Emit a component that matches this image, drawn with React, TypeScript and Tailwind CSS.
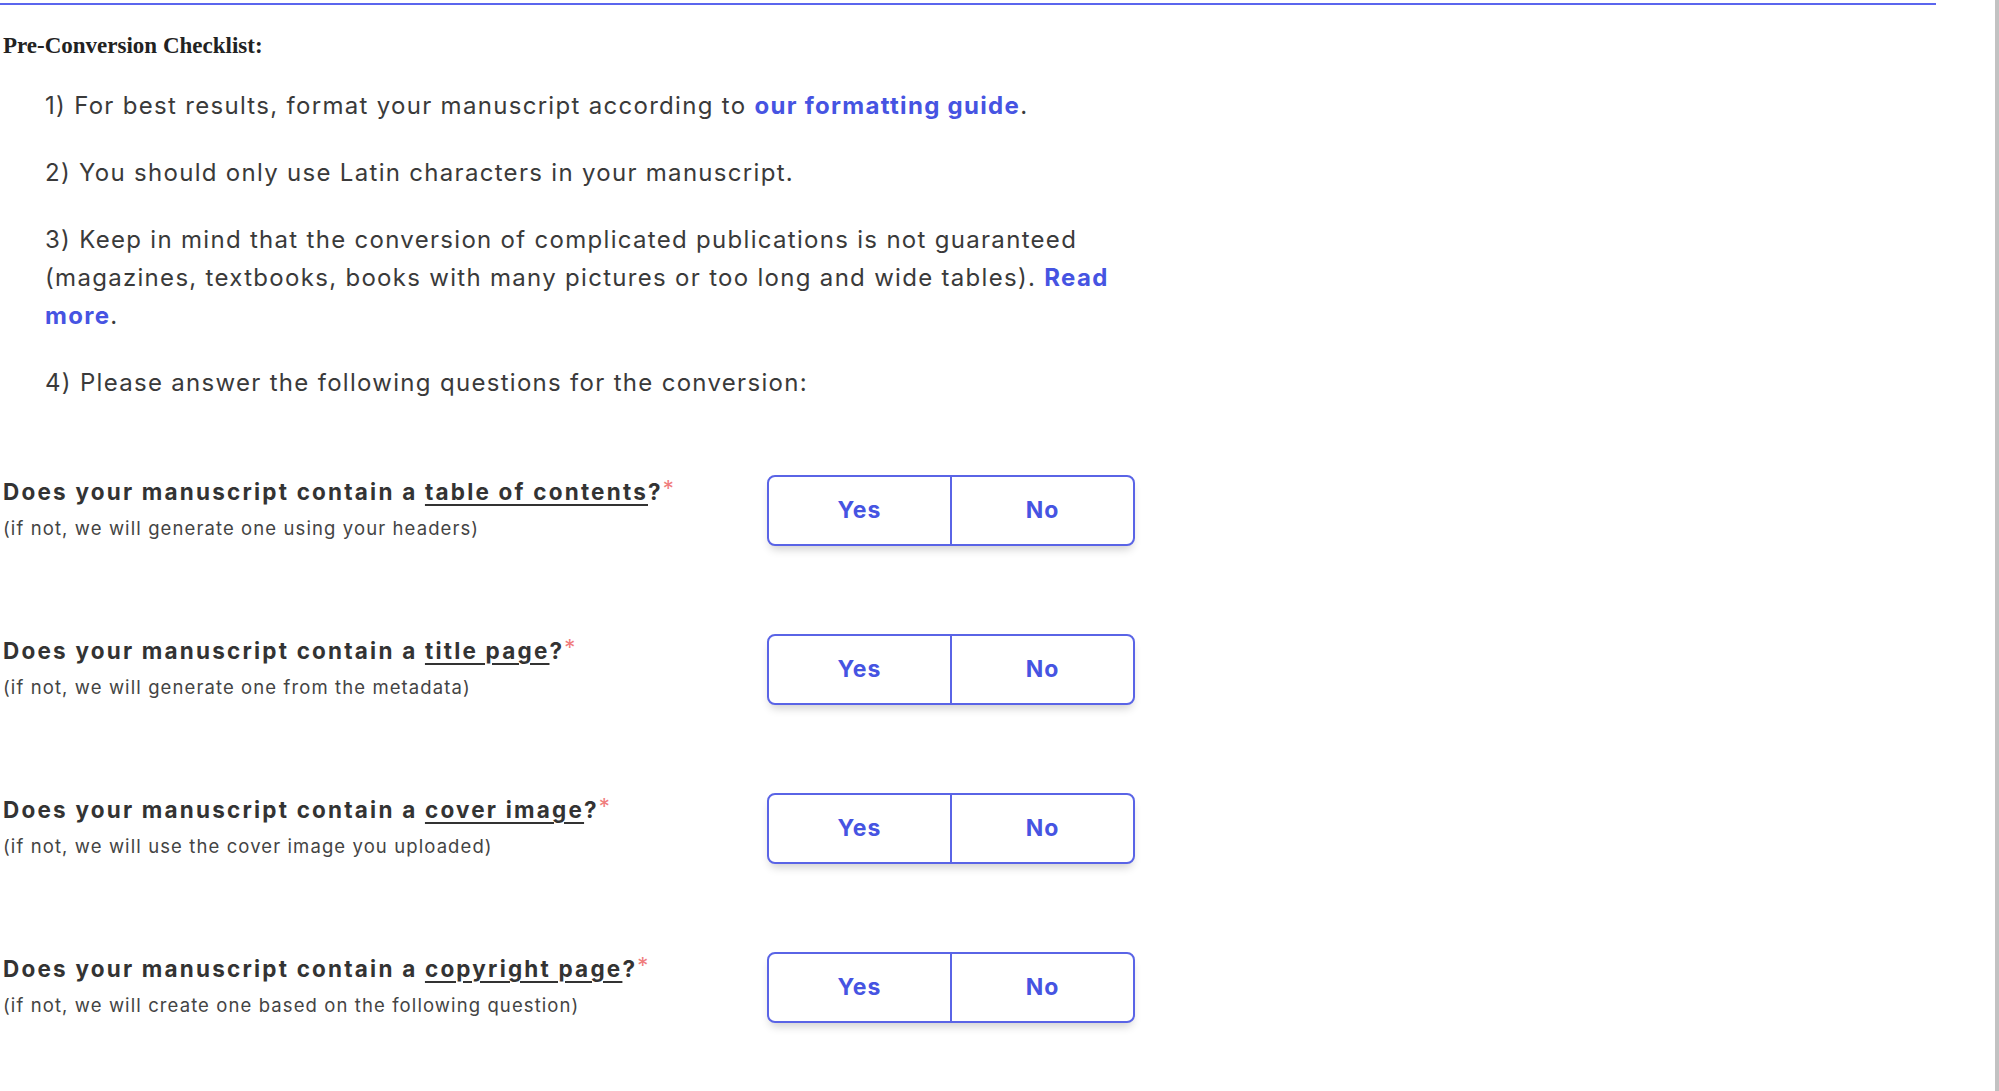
import React from 'react'

// ============================================
// Data
// ============================================

const questions = [
  {
    before: 'Does your manuscript contain a ',
    term: 'table of contents',
    hint: '(if not, we will generate one using your headers)',
  },
  {
    before: 'Does your manuscript contain a ',
    term: 'title page',
    hint: '(if not, we will generate one from the metadata)',
  },
  {
    before: 'Does your manuscript contain a ',
    term: 'cover image',
    hint: '(if not, we will use the cover image you uploaded)',
  },
  {
    before: 'Does your manuscript contain a ',
    term: 'copyright page',
    hint: '(if not, we will create one based on the following question)',
  },
]

// ============================================
// Yes / No toggle
// ============================================

function YesNo() {
  return (
    <div className="flex h-[71px] w-[368px] shrink-0 overflow-hidden rounded-[8px] border-2 border-[#5a64e6] bg-white shadow-[0_6px_10px_-3px_rgba(0,0,0,0.2)]">
      <button className="flex-1 border-r-2 border-[#5a64e6] text-[23px] font-bold tracking-[1px] text-[#4654e2]">
        Yes
      </button>
      <button className="flex-1 text-[23px] font-bold tracking-[1px] text-[#4654e2]">No</button>
    </div>
  )
}

// ============================================
// Question row
// ============================================

function QuestionRow({ before, term, hint }: { before: string; term: string; hint: string }) {
  return (
    <div className="flex items-start">
      <div className="w-[764px] pt-[3px]">
        <p className="text-[22.5px] font-bold leading-[28px] tracking-[2.2px] text-[#333]">
          {before}
          <span className="underline decoration-[1.5px] underline-offset-[4px]">{term}</span>?
          <span className="relative -top-[4px] text-[22px] font-normal text-[#f07c7c]">*</span>
        </p>
        <p className="mt-[10px] text-[18.5px] leading-[24px] tracking-[1.1px] text-[#444]">{hint}</p>
      </div>
      <YesNo />
    </div>
  )
}

// ============================================
// Page
// ============================================

export default function App() {
  return (
    <div
      className="flex min-h-screen bg-white"
      style={{ fontFamily: 'Inter, "Open Sans", sans-serif' }}
    >
      <div className="flex-1">
        <div className="mt-[3px] h-[2px] w-[1936px] bg-[#5b66ee]" />

        <div className="w-[1140px] pl-[3px]">
          <h2 className="mt-[27px] font-['Liberation_Serif',serif] text-[23px] font-bold leading-[28px] text-[#222]">
            Pre-Conversion Checklist:
          </h2>

          <div className="mt-[27px] flex flex-col gap-[29px] pl-[42px] text-[24px] leading-[38px] tracking-[1.3px] text-[#3a3a3a]">
            <p>
              1) For best results, format your manuscript according to{' '}
              <a className="font-bold text-[#4654e2]">our formatting guide</a>.
            </p>
            <p>2) You should only use Latin characters in your manuscript.</p>
            <p>
              3) Keep in mind that the conversion of complicated publications is not guaranteed
              <br />
              (magazines, textbooks, books with many pictures or too long and wide tables).{' '}
              <a className="font-bold text-[#4654e2]">Read</a>
              <br />
              <a className="font-bold text-[#4654e2]">more</a>.
            </p>
            <p>4) Please answer the following questions for the conversion:</p>
          </div>

          <div className="mt-[73px] flex flex-col gap-[88px]">
            {questions.map((q) => (
              <QuestionRow key={q.term} {...q} />
            ))}
          </div>
        </div>
      </div>
      <div className="w-[4px] bg-[#c2c2c2]" />
    </div>
  )
}
